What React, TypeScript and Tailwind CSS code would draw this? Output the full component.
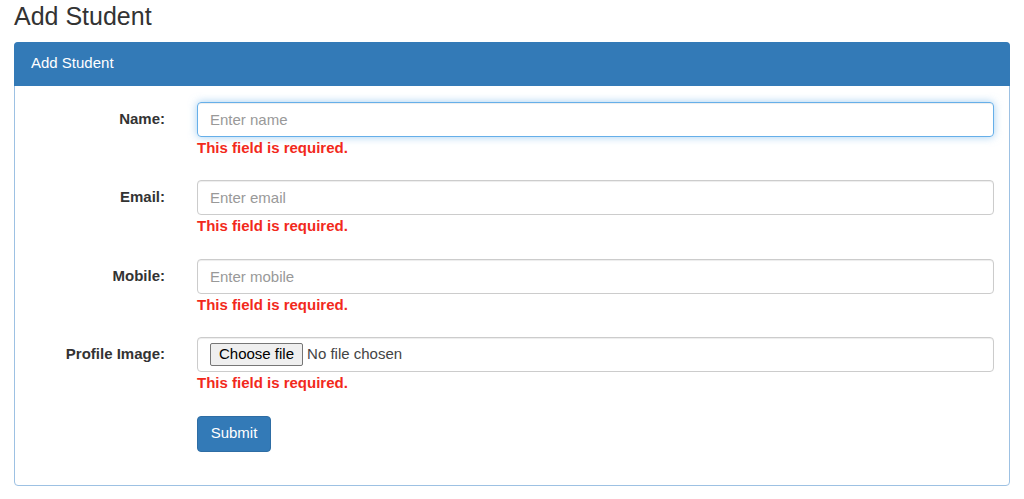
import React from 'react';

const fields = [
  { label: 'Name:', placeholder: 'Enter name', type: 'text' },
  { label: 'Email:', placeholder: 'Enter email', type: 'email' },
  { label: 'Mobile:', placeholder: 'Enter mobile', type: 'text' },
];

export default function App() {
  return (
    <div className="min-h-screen bg-white px-[14px] font-['Liberation_Sans',Arial,sans-serif] text-[15px] text-[#333]">
      <h3 className="pt-[3px] pb-[11px] text-[25px] leading-[1.1] font-normal text-[#333]">Add Student</h3>

      <div className="rounded-[4px] border border-[#9dc1e3] bg-white">
        <div className="-mx-px -mt-px flex h-[44px] items-center rounded-t-[4px] bg-[#337ab7] px-[17px] text-white">
          Add Student
        </div>

        <form className="grid grid-cols-[150px_1fr] gap-x-[32px] pt-[16px] pr-[15px] pb-[33px]">
          {fields.map((f, i) => (
            <React.Fragment key={f.label}>
              <label className="pt-[6px] text-right font-bold leading-[21px]">{f.label}</label>
              <div className="mb-[22.5px]">
                <input
                  type={f.type}
                  placeholder={f.placeholder}
                  autoFocus={i === 0}
                  className={
                    'block h-[35px] w-full rounded-[4px] border px-[12px] text-[15px] text-[#555] outline-none placeholder:text-[#999] ' +
                    (i === 0
                      ? 'border-[#66afe9] shadow-[inset_0_1px_1px_rgba(0,0,0,0.075),0_0_8px_rgba(102,175,233,0.6)]'
                      : 'border-[#ccc] shadow-[inset_0_1px_1px_rgba(0,0,0,0.075)]')
                  }
                />
                <span className="block font-bold leading-[21px] text-[#f2291c]">This field is required.</span>
              </div>
            </React.Fragment>
          ))}

          <label className="pt-[6px] text-right font-bold leading-[21px]">Profile Image:</label>
          <div className="mb-[22.5px]">
            <label className="flex h-[35px] w-full cursor-pointer items-center rounded-[4px] border border-[#ccc] px-[12px] text-[15px] shadow-[inset_0_1px_1px_rgba(0,0,0,0.075)]">
              <input type="file" className="hidden" />
              <span className="flex h-[23px] items-center rounded-[2px] border border-[#767676] bg-[#efefef] px-[8px] text-black">
                Choose file
              </span>
              <span className="ml-[4px] text-[#444]">No file chosen</span>
            </label>
            <span className="block font-bold leading-[21px] text-[#f2291c]">This field is required.</span>
          </div>

          <div />
          <div>
            <button
              type="submit"
              className="h-[36px] w-[74px] rounded-[4px] border border-[#2e6da4] bg-[#337ab7] text-[15px] text-white"
            >
              Submit
            </button>
          </div>
        </form>
      </div>
    </div>
  );
}
